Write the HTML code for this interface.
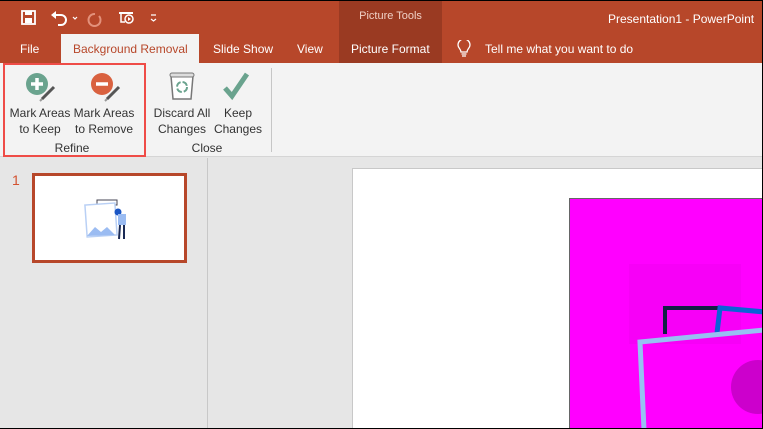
<!DOCTYPE html>
<html><head><meta charset="utf-8"><style>
*{margin:0;padding:0;box-sizing:border-box}
body{width:763px;height:429px;overflow:hidden;background:#e6e6e6;font-family:"Segoe UI","Liberation Sans",sans-serif;position:relative}
.abs{position:absolute}
.t{color:#fff;font-size:12px;white-space:nowrap}
.r{color:#333;font-size:12px;text-align:center;line-height:16px;white-space:nowrap}
</style></head><body>
<div class="abs" style="left:0;top:0;width:763px;height:63px;background:#b7472a"></div>
<div class="abs" style="left:339px;top:0;width:103px;height:63px;background:#9a3a22"></div>
<div class="abs" style="left:0;top:0;width:763px;height:1px;background:#000"></div>
<svg class="abs" style="left:18px;top:8px" width="150" height="20" viewBox="0 0 150 20">
<rect x="4" y="3" width="13" height="13" fill="none" stroke="#fff" stroke-width="1.8"/><rect x="7" y="3" width="7" height="4" fill="#fff"/><rect x="7" y="10" width="7" height="5" fill="#fff"/>
<path d="M35 7 h8 a5 5 0 0 1 0 10 h-3" fill="none" stroke="#fff" stroke-width="2"/><path d="M33 7 l5 -4 v8z" fill="#fff"/>
<path d="M55 9 l2 2 l2 -2" fill="none" stroke="#fff" stroke-width="1.2"/>
<path d="M77 6 a6 6 0 1 0 4 2" fill="none" stroke="#e3917b" stroke-width="2"/>
<rect x="101" y="4" width="14" height="2" fill="#fff"/><path d="M103 6 v8 h4" fill="none" stroke="#fff" stroke-width="1.5"/><circle cx="111" cy="11" r="4" fill="none" stroke="#fff" stroke-width="1.5"/><path d="M110 9 l3 2 l-3 2z" fill="#fff"/>
<path d="M133 7 h5 M133 11 l2.5 2 l2.5 -2" fill="none" stroke="#fff" stroke-width="1.2"/>
</svg>
<div class="abs t" style="left:339px;top:10px;width:103px;text-align:center;color:#f0d0c6;font-size:11px">Picture Tools</div>
<div class="abs t" style="left:608px;top:12px">Presentation1 - PowerPoint</div>
<div class="abs t" style="left:20px;top:42px">File</div>
<div class="abs" style="left:61px;top:34px;width:138px;height:30px;background:#f3f3f3"></div>
<div class="abs t" style="left:73px;top:42px;color:#b7472a">Background Removal</div>
<div class="abs t" style="left:213px;top:42px">Slide Show</div>
<div class="abs t" style="left:297px;top:42px">View</div>
<div class="abs t" style="left:351px;top:42px">Picture Format</div>
<svg class="abs" style="left:457px;top:40px" width="14" height="18" viewBox="0 0 14 18"><path d="M4 12 c0-3-3-4-3-7 a6 6 0 0 1 12 0 c0 3-3 4-3 7z M4.5 14 h5 M5 16 h4" fill="none" stroke="#fff" stroke-width="1.3"/></svg>
<div class="abs t" style="left:485px;top:42px">Tell me what you want to do</div>
<div class="abs" style="left:0;top:63px;width:763px;height:94px;background:#f3f3f3;border-bottom:1px solid #d5d5d5"></div>
<div class="abs" style="left:3px;top:63px;width:143px;height:94px;border:2px solid #ef4c47"></div>
<svg class="abs" style="left:20px;top:68px" width="110" height="36" viewBox="0 0 110 36">
<circle cx="17" cy="16" r="11" fill="#6aa38e"/><path d="M17 10 v12 M11 16 h12" stroke="#fff" stroke-width="3.5"/>
<path d="M22 31 l12 -12" stroke="#555" stroke-width="3"/><path d="M20 33 l2 -2" stroke="#999" stroke-width="2"/>
<circle cx="82" cy="16" r="11" fill="#d9613f"/><path d="M76 16 h12" stroke="#fff" stroke-width="3.5"/>
<path d="M87 31 l12 -12" stroke="#555" stroke-width="3"/><path d="M85 33 l2 -2" stroke="#999" stroke-width="2"/>
</svg>
<div class="abs r" style="left:8px;top:105px;width:64px">Mark Areas<br>to Keep</div>
<div class="abs r" style="left:72px;top:105px;width:64px">Mark Areas<br>to Remove</div>
<div class="abs r" style="left:40px;top:140px;width:64px">Refine</div>
<svg class="abs" style="left:165px;top:68px" width="90" height="36" viewBox="0 0 90 36">
<path d="M6 8 h22 l-2 23 h-18z" fill="#fff" stroke="#777" stroke-width="1.5"/><rect x="5" y="5" width="24" height="4" rx="2" fill="#ddd" stroke="#777"/>
<circle cx="17" cy="19" r="5" fill="none" stroke="#6aa38e" stroke-width="2" stroke-dasharray="6 2"/>
<path d="M60 20 l7 8 l15 -22" fill="none" stroke="#6aa38e" stroke-width="5"/>
</svg>
<div class="abs r" style="left:150px;top:105px;width:64px">Discard All<br>Changes</div>
<div class="abs r" style="left:210px;top:105px;width:56px">Keep<br>Changes</div>
<div class="abs r" style="left:175px;top:140px;width:64px">Close</div>
<div class="abs" style="left:271px;top:68px;width:1px;height:84px;background:#c6c6c6"></div>
<div class="abs" style="left:207px;top:158px;width:1px;height:271px;background:#c8c8c8"></div>
<div class="abs" style="left:12px;top:172px;color:#d35230;font-size:14px">1</div>
<div class="abs" style="left:32px;top:173px;width:155px;height:90px;border:3px solid #b7472a;background:#fff"></div>
<svg class="abs" style="left:82px;top:198px" width="50" height="45" viewBox="0 0 50 45">
<rect x="15" y="2" width="20" height="5" fill="none" stroke="#445" stroke-width="1"/>
<rect x="4" y="6" width="30" height="32" fill="#fff" stroke="#b9d0f5" stroke-width="1.5" transform="rotate(-4 19 22)"/>
<path d="M5 38 l8-9 l6 5 l6-5 l8 8z" fill="#9bbcf2"/>
<circle cx="36" cy="14" r="3.5" fill="#1a55c4"/><rect x="36" y="16" width="8" height="11" fill="#9bbcf2"/>
<path d="M38 27 l-1 14 M42 27 l0 14" stroke="#1a2a55" stroke-width="2"/>
</svg>
<div class="abs" style="left:352px;top:168px;width:411px;height:261px;background:#fff;border:1px solid #c8c8c8;border-right:none;border-bottom:none"></div>
<div class="abs" style="left:569px;top:198px;width:194px;height:231px;border:1px solid #666;border-right:none;border-bottom:none;background:#ff00ff;overflow:hidden">
<svg width="194" height="231" viewBox="569 198 194 231" style="display:block">
<rect x="628" y="263" width="112" height="80" fill="#f700f7"/>
<path d="M664 333 v-26 h56" fill="none" stroke="#102045" stroke-width="4"/>
<path d="M716 332 l3-25 l45 4" fill="none" stroke="#0b62d6" stroke-width="5"/>
<path d="M643 429 l-4-88 l124-12" fill="none" stroke="#98bff2" stroke-width="5"/>
<circle cx="757" cy="386" r="27" fill="#cc00cc"/>
</svg></div>
<div class="abs" style="left:762px;top:0;width:1px;height:429px;background:#000"></div>
<div class="abs" style="left:0;top:428px;width:763px;height:1px;background:#000"></div>
</body></html>
